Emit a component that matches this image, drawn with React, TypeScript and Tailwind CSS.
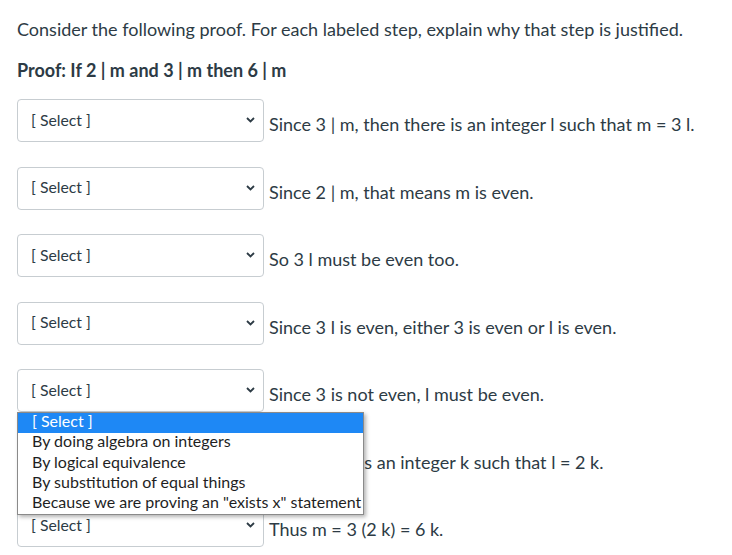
import React from "react";

const rows = [
  "Since 3 | m, then there is an integer l such that m = 3 l.",
  "Since 2 | m, that means m is even.",
  "So 3 l must be even too.",
  "Since 3 l is even, either 3 is even or l is even.",
  "Since 3 is not even, l must be even.",
  "Then there is an integer k such that l = 2 k.",
  "Thus m = 3 (2 k) = 6 k.",
];

const options = [
  "[ Select ]",
  "By doing algebra on integers",
  "By logical equivalence",
  "By substitution of equal things",
  'Because we are proving an "exists x" statement',
];

function Chevron() {
  return (
    <svg width="9" height="6" viewBox="0 0 9 6" className="mt-[1px]">
      <path d="M1 1 L4.5 4.5 L8 1" fill="none" stroke="#2d3b45" strokeWidth="1.8" />
    </svg>
  );
}

export default function App() {
  return (
    <div
      className="w-[732px] h-[555px] bg-white overflow-hidden text-[#2d3b45] pl-[17px]"
      style={{ fontFamily: "Lato, 'Open Sans', sans-serif" }}
    >
      <p className="pt-[18px] text-[18px] leading-[22px]">
        Consider the following proof. For each labeled step, explain why that step is justified.
      </p>
      <p className="mt-[19px] text-[18px] leading-[22px] font-bold">Proof: If 2 | m and 3 | m then 6 | m</p>
      <div className="mt-[18px] flex flex-col gap-[24.5px]">
        {rows.map((t, i) => (
          <div key={i} className="relative flex h-[43px]">
            <div className="flex items-center justify-between w-[247px] h-[43px] pl-[13px] pr-[8px] pb-[2px] border border-[#c7cdd1] rounded-[4px] bg-white shrink-0">
              <span className="text-[15.8px] leading-[20px]">[ Select ]</span>
              <Chevron />
            </div>
            <span className="ml-[5px] mt-[14px] text-[18px] leading-[22px] whitespace-nowrap">{t}</span>
            {i === 4 && (
              <div className="absolute left-0 top-[43px] w-[347px] bg-white border border-[#8a8a8a] shadow-[2px_2px_4px_rgba(0,0,0,0.3)] z-10 text-[16px] text-[#1f1f1f]">
                {options.map((o, j) => (
                  <div
                    key={j}
                    className={
                      "pl-[14px] leading-[16.25px] pb-[4px] whitespace-nowrap " +
                      (j === 0 ? "bg-[#1e88f5] text-white" : "")
                    }
                  >
                    {o}
                  </div>
                ))}
              </div>
            )}
          </div>
        ))}
      </div>
    </div>
  );
}
